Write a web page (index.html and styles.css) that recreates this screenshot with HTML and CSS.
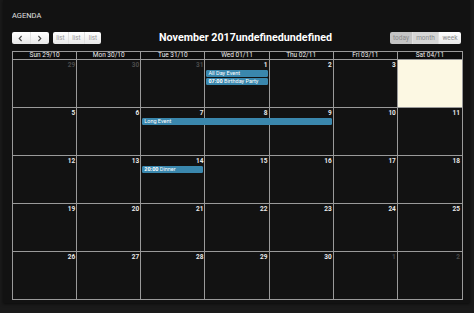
FILE: index.html
```html
<!DOCTYPE html>
<html>
<head>
<meta charset="utf-8">
<link rel="stylesheet" href="styles.css">
</head>
<body>
<div class="card">
  <div class="card-title">AGENDA</div>
  <div class="toolbar">
    <div class="tb-left">
      <div class="btn-group">
        <button class="btn nav">
          <svg width="7" height="7" viewBox="0 0 7 7"><path d="M4.6 1 L2.2 3.5 L4.6 6" fill="none" stroke="#444" stroke-width="1.1"/></svg>
        </button>
        <button class="btn nav">
          <svg width="7" height="7" viewBox="0 0 7 7"><path d="M2.4 1 L4.8 3.5 L2.4 6" fill="none" stroke="#444" stroke-width="1.1"/></svg>
        </button>
      </div>
      <div class="btn-group">
        <button class="btn list">list</button>
        <button class="btn list">list</button>
        <button class="btn list">list</button>
      </div>
    </div>
    <h2 class="title">November 2017undefinedundefined</h2>
    <div class="btn-group">
      <button class="btn v today">today</button>
      <button class="btn v active">month</button>
      <button class="btn v">week</button>
    </div>
  </div>

  <div class="cal">
    <div class="head">
      <div>Sun 29/10</div><div>Mon 30/10</div><div>Tue 31/10</div><div>Wed 01/11</div><div>Thu 02/11</div><div>Fri 03/11</div><div>Sat 04/11</div>
    </div>

    <div class="week">
      <div class="bg c1"></div><div class="bg c2"></div><div class="bg c3"></div><div class="bg c4"></div><div class="bg c5"></div><div class="bg c6"></div><div class="bg c7 today-cell"></div>
      <div class="num other c1">29</div><div class="num other c2">30</div><div class="num other c3">31</div><div class="num c4">1</div><div class="num c5">2</div><div class="num c6">3</div><div class="num today-num c7">4</div>
      <div class="ev r2 c4">All Day Event</div>
      <div class="ev r3 c4"><b>07:00</b> Birthday Party</div>
    </div>

    <div class="week">
      <div class="bg c1"></div><div class="bg c2"></div><div class="bg c3"></div><div class="bg c4"></div><div class="bg c5"></div><div class="bg c6"></div><div class="bg c7"></div>
      <div class="num c1">5</div><div class="num c2">6</div><div class="num c3">7</div><div class="num c4">8</div><div class="num c5">9</div><div class="num c6">10</div><div class="num c7">11</div>
      <div class="ev r2 span-long">Long Event</div>
    </div>

    <div class="week">
      <div class="bg c1"></div><div class="bg c2"></div><div class="bg c3"></div><div class="bg c4"></div><div class="bg c5"></div><div class="bg c6"></div><div class="bg c7"></div>
      <div class="num c1">12</div><div class="num c2">13</div><div class="num c3">14</div><div class="num c4">15</div><div class="num c5">16</div><div class="num c6">17</div><div class="num c7">18</div>
      <div class="ev r2 c3"><b>20:00</b> Dinner</div>
    </div>

    <div class="week">
      <div class="bg c1"></div><div class="bg c2"></div><div class="bg c3"></div><div class="bg c4"></div><div class="bg c5"></div><div class="bg c6"></div><div class="bg c7"></div>
      <div class="num c1">19</div><div class="num c2">20</div><div class="num c3">21</div><div class="num c4">22</div><div class="num c5">23</div><div class="num c6">24</div><div class="num c7">25</div>
    </div>

    <div class="week">
      <div class="bg c1"></div><div class="bg c2"></div><div class="bg c3"></div><div class="bg c4"></div><div class="bg c5"></div><div class="bg c6"></div><div class="bg c7"></div>
      <div class="num c1">26</div><div class="num c2">27</div><div class="num c3">28</div><div class="num c4">29</div><div class="num c5">30</div><div class="num other c6">1</div><div class="num other c7">2</div>
    </div>
  </div>
</div>
</body>
</html>
```

FILE: styles.css
```css
* { box-sizing: border-box; }
html, body { margin: 0; padding: 0; }
body {
  background: #1a1a1a;
  font-family: Roboto, "Liberation Sans", Arial, sans-serif;
  color: #e6e6e6;
  width: 474px;
  height: 313px;
  overflow: hidden;
}
.card {
  margin: 0 4px 0 3px;
  height: 303px;
  background: #121212;
  box-shadow: 0 1px 3px rgba(0,0,0,0.6);
  padding: 10px 9px 0 9px;
}
.card-title {
  font-size: 7.5px;
  color: #e0e0e0;
  height: 22px;
  line-height: 10px;
  padding-top: 1px;
}
.toolbar {
  display: flex;
  align-items: center;
  height: 12px;
  margin-bottom: 7px;
}
.tb-left { display: flex; gap: 4px; }
.title {
  flex: 1;
  margin: 0;
  text-align: center;
  font-size: 10.7px;
  font-weight: 700;
  color: #ffffff;
  line-height: 12px;
}
.btn-group {
  display: flex;
  border-radius: 2px;
  overflow: hidden;
  height: 12px;
}
.btn {
  border: 0;
  margin: 0;
  padding: 0;
  height: 12px;
  background: linear-gradient(#ffffff, #e8e8e8);
  font-family: inherit;
  font-size: 6px;
  color: #333;
  display: flex;
  align-items: center;
  justify-content: center;
  border-right: 1px solid #e0e0e0;
}
.btn:last-child { border-right: 0; }
.nav { width: 18.5px; }
.list { width: 16px; color: #999; font-size: 6.3px; }
.v { color: #8a8a8a; font-size: 6.5px; }
.v.today { width: 23px; background: #c4c4c4; color: #8a8a8a; }
.v.active { width: 26px; background: #d6d6d6; }
.btn-group .v:nth-child(3) { width: 22px; }

.cal {
  width: 451px;
  border-left: 1px solid #9a9a9a;
  border-right: 1px solid #9a9a9a;
}
.head {
  display: grid;
  grid-template-columns: repeat(7, 1fr);
  border-top: 1px solid #9a9a9a;
  border-bottom: 1px solid #9a9a9a;
  background: #0c0c0c;
}
.head div {
  text-align: center;
  font-size: 6.5px;
  line-height: 7px;
  height: 7px;
  color: #f0f0f0;
  border-right: 1px solid #9a9a9a;
}
.head div:last-child { border-right: 0; }

.week {
  display: grid;
  grid-template-columns: repeat(7, 1fr);
  grid-template-rows: 10px 8px 8px 1fr;
  height: 48px;
  border-bottom: 1px solid #9a9a9a;
}
.bg {
  grid-row: 1 / -1;
  border-right: 1px solid #9a9a9a;
}
.bg.c7 { border-right: 0; }
.today-cell { background: #fcf8e3; }
.c1 { grid-column: 1; }
.c2 { grid-column: 2; }
.c3 { grid-column: 3; }
.c4 { grid-column: 4; }
.c5 { grid-column: 5; }
.c6 { grid-column: 6; }
.c7 { grid-column: 7; }
.num {
  grid-row: 1;
  text-align: right;
  font-size: 6.5px;
  font-weight: 700;
  line-height: 8px;
  padding: 1px 2px 0 0;
  color: #e8e8e8;
}
.num.other { color: #4a4a4a; }
.num.today-num { color: #fcf8e3; }
.r2 { grid-row: 2; }
.r3 { grid-row: 3; }
.span-long { grid-column: 3 / 6; }
.ev {
  margin: 0 2px 1px 1px;
  height: 7px;
  background: #3a87ad;
  border: 1px solid #3a87ad;
  border-radius: 1px;
  font-size: 5.5px;
  line-height: 5px;
  color: #fff;
  padding-left: 1px;
  white-space: nowrap;
  overflow: hidden;
}
.ev b { font-weight: 700; }
```
